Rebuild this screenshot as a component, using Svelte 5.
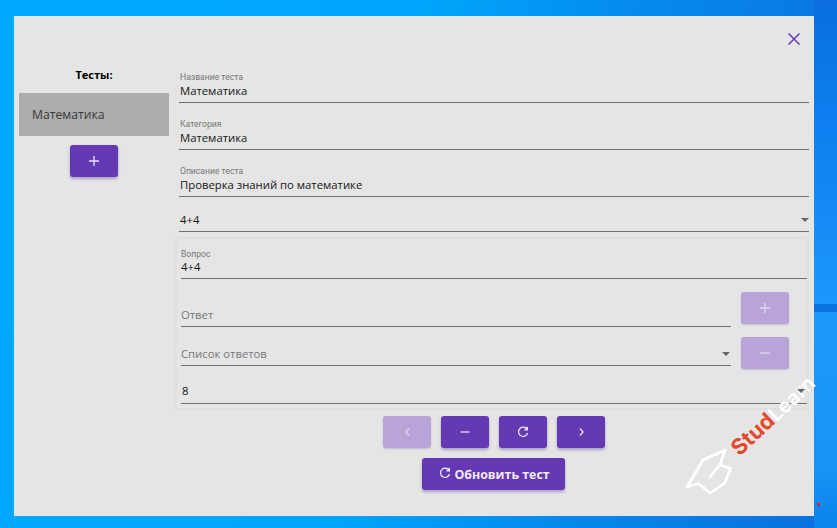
<script>
  const tests = ['Математика'];
  const fields = [
    { label: 'Название теста', value: 'Математика' },
    { label: 'Категория', value: 'Математика' },
    { label: 'Описание теста', value: 'Проверка знаний по математике' }
  ];
</script>

<div class="desktop">
  <div class="streak one"></div>
  <div class="streak two"></div>
  <div class="dot"></div>

  <div class="dialog">
    <div class="top">
      <svg class="close" width="12" height="12" viewBox="0 0 12 12">
        <path d="M0.5 0.5 L11.5 11.5 M11.5 0.5 L0.5 11.5" stroke="#673ab7" stroke-width="1.5" fill="none" />
      </svg>
    </div>

    <div class="columns">
      <aside>
        <div class="heading">Тесты:</div>
        {#each tests as test}
          <div class="test-item">{test}</div>
        {/each}
        <button class="btn add">
          <svg width="10" height="10" viewBox="0 0 10 10"><path d="M5 0 V10 M0 5 H10" /></svg>
        </button>
      </aside>

      <main>
        {#each fields as f}
          <div class="field">
            <span class="label">{f.label}</span>
            <span class="value">{f.value}</span>
          </div>
        {/each}

        <div class="select top-select">
          <span class="value">4+4</span>
          <i class="caret"></i>
        </div>

        <section class="panel">
          <div class="field question">
            <span class="label">Вопрос</span>
            <span class="value">4+4</span>
          </div>

          <div class="row answer">
            <div class="placeholder">Ответ</div>
            <button class="btn off">
              <svg width="10" height="10" viewBox="0 0 10 10"><path d="M5 0 V10 M0 5 H10" /></svg>
            </button>
          </div>

          <div class="row list">
            <div class="placeholder">Список ответов<i class="caret"></i></div>
            <button class="btn off">
              <svg width="10" height="10" viewBox="0 0 10 10"><path d="M0 5 H10" /></svg>
            </button>
          </div>

          <div class="select correct">
            <span class="value">8</span>
            <i class="caret"></i>
          </div>
        </section>

        <div class="nav">
          <button class="btn off">
            <svg width="5" height="8" viewBox="0 0 5 8"><path d="M4 0.5 L1 4 L4 7.5" /></svg>
          </button>
          <button class="btn">
            <svg width="10" height="10" viewBox="0 0 10 10"><path d="M0.5 5 H9.5" /></svg>
          </button>
          <button class="btn">
            <svg width="12" height="12" viewBox="0 0 12 12"><path d="M10.2 3.6 A4.6 4.6 0 1 0 10.6 7 M10.4 0.8 V3.8 H7.4" /></svg>
          </button>
          <button class="btn">
            <svg width="5" height="8" viewBox="0 0 5 8"><path d="M1 0.5 L4 4 L1 7.5" /></svg>
          </button>
        </div>

        <button class="btn update">
          <svg width="12" height="12" viewBox="0 0 12 12"><path d="M10.2 3.6 A4.6 4.6 0 1 0 10.6 7 M10.4 0.8 V3.8 H7.4" /></svg>
          Обновить тест
        </button>
      </main>
    </div>
  </div>

  <div class="watermark">
    <svg width="68" height="56" viewBox="0 0 68 56">
      <path d="M3 47 L19 20 L41 10 L36 25 L46.5 28.5 L41 43 L26 53 L14.5 43.5 Z M26 37 L34 27" fill="none" stroke="#fff" stroke-width="2.6" stroke-linejoin="round" stroke-linecap="round" />
    </svg>
    <span class="mark"><b>Stud</b>Learn</span>
  </div>
</div>

<style>
  :global(body) {
    margin: 0;
  }

  .desktop {
    position: relative;
    width: 837px;
    height: 528px;
    overflow: hidden;
    padding: 16px 0 0 14px;
    box-sizing: border-box;
    background: linear-gradient(100deg, #00aaff 0%, #00a6fb 45%, #0687ea 72%, #0b6fdf 100%);
    font-family: "Open Sans", "Liberation Sans", sans-serif;
  }

  .streak {
    position: absolute;
    left: 814px;
    width: 23px;
  }

  .streak.one {
    top: 0;
    height: 304px;
    background: linear-gradient(180deg, #0a6ede 0%, #0d7ff0 40%, #1c97fb 100%);
  }

  .streak.two {
    top: 312px;
    height: 216px;
    background: linear-gradient(180deg, #1c98fb 0%, #1a93f7 70%, #0b84ea 100%);
  }

  .dot {
    position: absolute;
    left: 817px;
    top: 503px;
    width: 3px;
    height: 3px;
    background: #e3242b;
  }

  .dialog {
    width: 800px;
    height: 500px;
    background: #e5e5e5;
    box-sizing: border-box;
  }

  .top {
    display: flex;
    justify-content: flex-end;
    padding: 17px 14px 0 0;
    height: 30px;
    box-sizing: border-box;
  }

  .close {
    display: block;
  }

  .columns {
    display: flex;
    padding: 0 5px;
    gap: 6px;
  }

  aside {
    width: 150px;
    flex: none;
    display: flex;
    flex-direction: column;
    align-items: center;
  }

  .heading {
    margin-top: 20px;
    height: 27px;
    line-height: 18px;
    font-size: 11px;
    font-weight: 700;
    color: #000;
  }

  .test-item {
    align-self: stretch;
    height: 43px;
    line-height: 43px;
    padding-left: 13px;
    background: #adadad;
    color: #3a3a3a;
    font-size: 12.2px;
  }

  .add {
    margin-top: 9px;
  }

  main {
    flex: 1;
    display: flex;
    flex-direction: column;
    align-items: center;
    padding-top: 25px;
  }

  .field {
    align-self: stretch;
    height: 31px;
    margin: 0 0 15px 4px;
    border-bottom: 1px solid #6e6e6e;
    display: flex;
    flex-direction: column;
  }

  .label {
    font-family: Roboto, "Open Sans", sans-serif;
    font-size: 8.6px;
    line-height: 13px;
    color: #777;
    height: 11px;
    padding-left: 1px;
  }

  .value {
    font-size: 11.3px;
    line-height: 16px;
    color: #161616;
    height: 16px;
    padding-left: 1px;
  }

  .field .value {
    margin-top: 1px;
  }

  .select {
    align-self: stretch;
    display: flex;
    align-items: center;
    justify-content: space-between;
    border-bottom: 1px solid #6e6e6e;
  }

  .top-select {
    height: 16px;
    padding-bottom: 3px;
    margin: 0 0 5px 4px;
  }

  .caret {
    width: 0;
    height: 0;
    border-left: 4px solid transparent;
    border-right: 4px solid transparent;
    border-top: 4px solid #666;
  }

  .panel {
    align-self: stretch;
    height: 173px;
    box-sizing: border-box;
    border: 2px solid #e0e0e0;
    padding: 9px 0 0 4px;
  }

  .field.question {
    height: 30px;
    margin: 0;
  }

  .field.question .value {
    margin-top: 0;
  }

  .question .label,
  .question .value {
    padding-left: 0;
  }

  .row {
    display: flex;
    justify-content: space-between;
    align-items: flex-start;
    padding-right: 18px;
  }

  .answer {
    margin-top: 13px;
  }

  .list {
    margin-top: 10px;
  }

  .placeholder {
    width: 550px;
    box-sizing: border-box;
    display: flex;
    align-items: center;
    justify-content: space-between;
    font-size: 11.3px;
    color: #777;
    border-bottom: 1px solid #6e6e6e;
    padding-right: 1px;
  }

  .answer .placeholder {
    height: 35px;
    padding-top: 11px;
  }

  .list .placeholder {
    height: 29px;
    padding-top: 5px;
  }

  .correct {
    margin-top: 12px;
    height: 19px;
    padding-bottom: 3px;
  }

  /* this caret sits over the watermark */
  .correct .caret {
    position: relative;
    z-index: 2;
    margin-right: 2px;
  }

  .btn {
    width: 48px;
    height: 32px;
    border: 0;
    border-radius: 3px;
    padding: 0;
    background: #6439b3;
    color: #e9e2f5;
    display: flex;
    align-items: center;
    justify-content: center;
    flex: none;
    box-shadow: 0 2px 3px rgba(60, 30, 120, 0.35);
  }

  .btn svg {
    display: block;
    fill: none;
    stroke: currentColor;
    stroke-width: 1.3;
  }

  .btn.off {
    background: #b8a4d6;
    color: #e0d6ef;
    box-shadow: 0 1px 2px rgba(60, 30, 120, 0.2);
  }

  .nav {
    display: flex;
    gap: 10px;
    margin: 6px 0 0 4px;
  }

  .btn.update {
    width: 143px;
    margin: 10px 0 0 3px;
    padding: 1px 0 0 2px;
    gap: 3px;
    font-family: inherit;
    font-size: 12.4px;
    font-weight: 700;
    color: #f1ecf8;
  }

  .update svg {
    margin-top: -4px;
  }

  .watermark {
    position: absolute;
    left: 684px;
    top: 372px;
    width: 140px;
    height: 124px;
  }

  .watermark svg {
    position: absolute;
    left: 0;
    bottom: 0;
  }

  .mark {
    position: absolute;
    left: 36px;
    top: 30px;
    transform: rotate(-43deg);
    transform-origin: center;
    font-family: Inter, "Open Sans", sans-serif;
    font-size: 20px;
    font-weight: 600;
    color: #fff;
    white-space: nowrap;
  }

  .mark b {
    color: #e2492f;
    font-size: 22px;
    font-weight: 700;
  }
</style>
